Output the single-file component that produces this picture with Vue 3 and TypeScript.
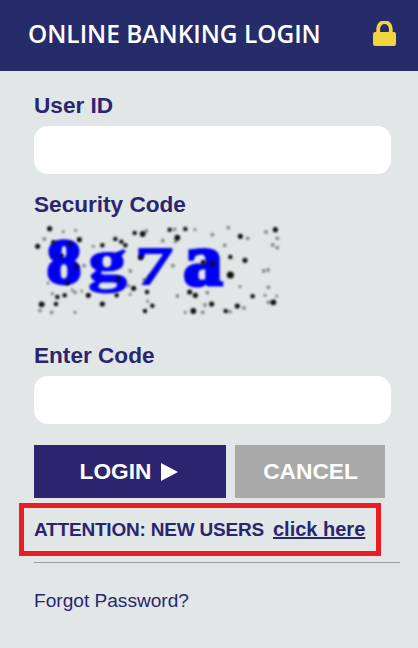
<script setup lang="ts">
const zoomDots: [number, number, number][] = [
  [89,41,5],[130,50,2],[167,46,2],[73,72,3],[53,94,5],[100,82,4],[150,88,4],[178,74,5],[125,122,4],[97,126,3],[170,155,4],[192,152,3],[142,205,4],[84,204,2],
  [220,94,2],[247,91,4],[286,72,4],[304,80,4],[316,91,4],[344,54,4],[368,57,6],[379,48,3],[428,77,3],[449,44,4],[464,43,3],[496,42,4],[525,44,2],[472,68,6],[467,79,3],[577,59,3],[625,38,3],
  [661,64,5],[683,70,3],[614,91,3],[631,126,4],[675,136,5],[631,180,8],[459,152,3],[362,128,5],[230,140,3],[294,192,4],[331,168,3],[388,184,3],[373,194,3],
  [738,51,3],[766,44,5],[772,70,3],[758,90,3],[772,98,3],[744,165,3],[731,168,3],[660,215,2],[745,217,3],
  [97,236,2],[112,246,4],[134,241,4],[157,225,2],[165,232,3],[185,228,2],[205,241,5],[65,268,6],[108,267,4],[60,287,3],[95,292,3],[247,267,5],[165,292,2],
  [325,212,3],[341,220,5],[331,238,2],[381,231,4],[290,241,4],[383,259,2],[397,272,4],[375,288,4],[472,243,3],[509,231,5],[526,241,5],[562,233,3],
  [555,270,3],[575,267,5],[520,288,6],[548,292,3],[496,292,2],[617,288,4],[630,290,3],[652,273,5],[672,279,3],[698,244,4],[735,241,2],[770,243,2],[760,262,6],[745,262,3],
  [550,142,5],[577,147,5]
];
const dots = zoomDots.map(([x, y, r]) => ({
  x: x / 3 - 14,
  y: y / 3 - 9,
  r: r / 3 + 0.9,
  o: r <= 3 ? 0.45 : 1
}));
</script>

<template>
  <div class="page">
    <header class="head">
      <h1>ONLINE BANKING LOGIN</h1>
      <svg class="lock" width="23" height="25" viewBox="0 0 23 25" aria-hidden="true">
        <path d="M5.2 12V7.5a6.3 6.3 0 0 1 12.6 0V12" fill="none" stroke="#f0d53e" stroke-width="3.8"/>
        <rect x="0" y="11" width="23" height="14" rx="2.2" fill="#f0d53e"/>
      </svg>
    </header>
    <main class="body">
      <label class="lbl first">User ID</label>
      <div class="input"></div>
      <label class="lbl second">Security Code</label>
      <svg class="captcha" width="245" height="89" viewBox="0 0 245 89" aria-label="8g7a">
        <g fill="#0000f0" stroke="#0000f0" font-family="'Liberation Serif', serif" class="cap">
          <text x="13" y="59" font-size="64" font-weight="700" stroke-width="3.6" textLength="34" lengthAdjust="spacingAndGlyphs">8</text>
          <text x="54" y="56" font-size="59" font-weight="700" stroke-width="1.2" textLength="39" lengthAdjust="spacingAndGlyphs">g</text>
          <text x="101" y="60" font-size="53" stroke-width="2.2" textLength="38" lengthAdjust="spacingAndGlyphs">7</text>
          <text x="149" y="61" font-size="76" font-weight="700" stroke-width="3" textLength="40" lengthAdjust="spacingAndGlyphs">a</text>
        </g>
        <g fill="#111" class="cap">
          <circle v-for="(d, i) in dots" :key="i" :cx="d.x" :cy="d.y" :r="d.r" :fill-opacity="d.o" />
        </g>
      </svg>
      <label class="lbl third">Enter Code</label>
      <div class="input"></div>
      <div class="buttons">
        <button class="btn login">
          LOGIN
          <svg width="17" height="18" viewBox="0 0 17 18" aria-hidden="true"><path d="M0 0L17 9L0 18Z" fill="#fff"/></svg>
        </button>
        <button class="btn cancel">CANCEL</button>
      </div>
      <div class="notice">
        <span class="att">ATTENTION: NEW USERS</span>
        <a class="here">click here</a>
      </div>
      <hr class="rule" />
      <a class="forgot">Forgot Password?</a>
    </main>
  </div>
</template>

<style scoped>
.page {
  width: 418px;
  height: 648px;
  background: #e1e7e6;
  font-family: "Liberation Sans", Arial, sans-serif;
  color: #2b2570;
  overflow: hidden;
}
.head {
  height: 71px;
  box-sizing: border-box;
  background: #262c6a;
  display: flex;
  align-items: center;
  justify-content: space-between;
  padding: 0 22px 4px 28px;
}
.head h1 {
  margin: 0;
  font: 600 24.45px "Open Sans", sans-serif;
  color: #fff;
}
.body {
  display: flex;
  flex-direction: column;
  padding: 0 18px 0 34px;
}
.lbl {
  font-size: 22.6px;
  font-weight: 700;
  line-height: 25px;
}
.first { margin-top: 22px; margin-bottom: 8px; }
.second { margin-top: 18px; margin-bottom: 7px; }
.third { margin-top: 30px; margin-bottom: 8px; }
.input {
  width: 357px;
  height: 48px;
  background: #fff;
  border-radius: 14px;
}
.captcha { display: block; overflow: visible; }
.cap { filter: blur(0.8px); }
.buttons {
  display: flex;
  gap: 9px;
  margin-top: 21px;
}
.btn {
  height: 53px;
  border: 0;
  padding: 0;
  color: #fff;
  font: 700 22.7px "Liberation Sans", Arial, sans-serif;
  display: flex;
  align-items: center;
  justify-content: center;
  gap: 10px;
}
.login { width: 192px; background: #2c246e; padding-right: 2px; }
.cancel { width: 150px; background: #a9a9a9; padding-left: 1px; }
.notice {
  box-sizing: border-box;
  width: 362px;
  height: 53px;
  margin: 5px 0 0 -15px;
  padding-left: 10px;
  border: 5px solid #ed1c24;
  display: flex;
  align-items: center;
  gap: 9px;
}
.att {
  font-size: 19px;
  font-weight: 700;
  letter-spacing: -0.2px;
}
.here {
  font-size: 20px;
  font-weight: 700;
  text-decoration: underline;
}
.rule {
  width: 366px;
  height: 1px;
  border: 0;
  margin: 6px 0 0;
  background: #9a9a9a;
}
.forgot {
  margin-top: 27px;
  font-size: 19.1px;
  line-height: 22px;
}
</style>
